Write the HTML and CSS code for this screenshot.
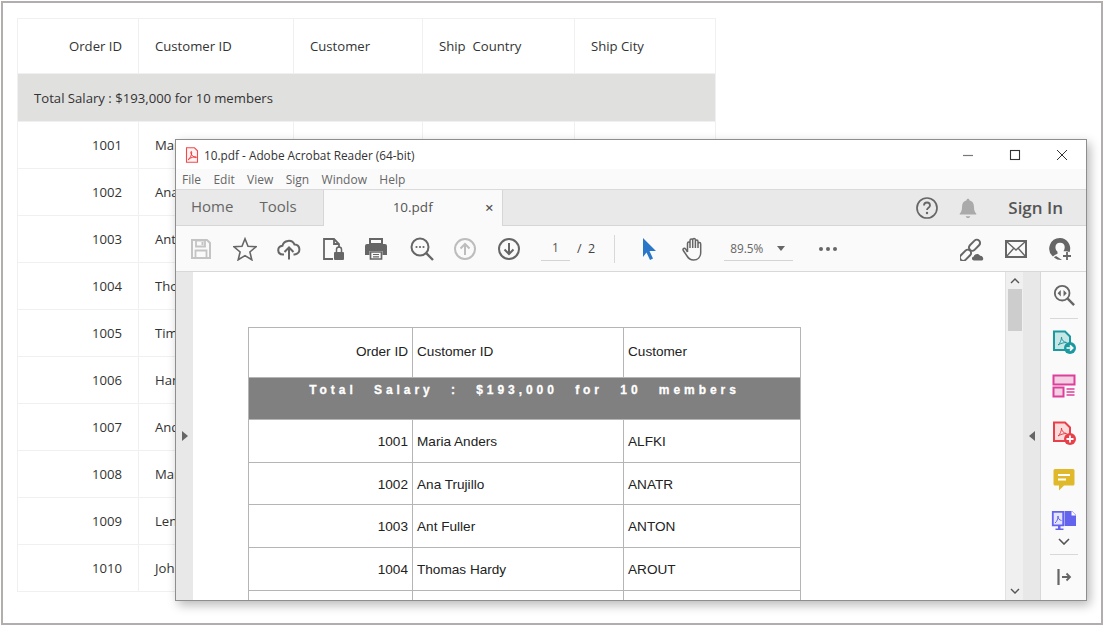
FILE: index.html
```html
<!DOCTYPE html>
<html lang="en">
<head>
<meta charset="utf-8">
<title>10.pdf - Adobe Acrobat Reader (64-bit)</title>
<link rel="stylesheet" href="styles.css">
</head>
<body>
<div class="frame">
  <table class="grid">
    <colgroup><col class="g1"><col class="g2"><col class="g3"><col class="g4"><col class="g5"></colgroup>
    <thead>
      <tr class="grid-head"><th class="num">Order ID</th><th>Customer ID</th><th>Customer</th><th class="pre">Ship  Country</th><th>Ship City</th></tr>
    </thead>
    <tbody>
      <tr class="grid-cap"><td colspan="5">Total Salary : $193,000 for 10 members</td></tr>
      <tr><td class="num">1001</td><td>Maria Anders</td><td>ALFKI</td><td></td><td></td></tr>
      <tr><td class="num">1002</td><td>Ana Trujillo</td><td>ANATR</td><td></td><td></td></tr>
      <tr><td class="num">1003</td><td>Ant Fuller</td><td>ANTON</td><td></td><td></td></tr>
      <tr><td class="num">1004</td><td>Thomas Hardy</td><td>AROUT</td><td></td><td></td></tr>
      <tr><td class="num">1005</td><td>Tim Adams</td><td></td><td></td><td></td></tr>
      <tr><td class="num">1006</td><td>Hanna Moos</td><td></td><td></td><td></td></tr>
      <tr><td class="num">1007</td><td>Andrew Fuller</td><td></td><td></td><td></td></tr>
      <tr><td class="num">1008</td><td>Martin King</td><td></td><td></td><td></td></tr>
      <tr><td class="num">1009</td><td>Lenny Lin</td><td></td><td></td><td></td></tr>
      <tr><td class="num">1010</td><td>John Steel</td><td></td><td></td><td></td></tr>
    </tbody>
  </table>

  <section class="win">
    <header class="titlebar">
      <svg class="pdficon" viewBox="0 0 14 16"><path d="M1.500.8h8l3 3v11.400h-11z" fill="#fff3f3" stroke="#f0494e" stroke-width="1.100"/><path d="M3 12.600c2-1 3.600-4 3.700-7.400 0-1-.9-1-.9 0 0 2.500 2.500 5 5 5.400.9.100.9-.8 0-.8-2.200-.1-5 .8-6.600 2.200-.6.500-.8.900-1.200.6z" fill="none" stroke="#ee3a40" stroke-width="1"/></svg>
      <span class="wintitle">10.pdf - Adobe Acrobat Reader (64-bit)</span>
      <div class="winbtns">
        <svg viewBox="0 0 12 12"><path d="M1 6.500h10" stroke="#777" stroke-width="1.200"/></svg>
        <svg viewBox="0 0 12 12"><rect x="1.500" y="1.500" width="9" height="9" fill="none" stroke="#333" stroke-width="1.100"/></svg>
        <svg viewBox="0 0 12 12"><path d="M1 1l10 10M11 1L1 11" stroke="#333" stroke-width="1"/></svg>
      </div>
    </header>
    <nav class="menubar"><span>File</span><span>Edit</span><span>View</span><span>Sign</span><span>Window</span><span>Help</span></nav>
    <div class="tabs">
      <span class="tab-link">Home</span><span class="tab-link tools">Tools</span>
      <div class="doctab"><span class="doctab-name">10.pdf</span><span class="doctab-x">×</span></div>
      <div class="tabs-right">
        <svg class="ic" viewBox="0 0 24 24"><circle cx="12" cy="12" r="10" fill="none" stroke="#666" stroke-width="1.700"/><path d="M9 9.500c0-4 6-4 6 0 0 2.300-3 2.300-3 4.500" fill="none" stroke="#666" stroke-width="1.800"/><circle cx="12" cy="17" r="1.200" fill="#666"/></svg>
        <svg class="ic bell" viewBox="0 0 24 24"><path d="M12 2c1 0 1.500.7 1.500 1.500 3.500 1 5 3.500 5 7 0 4 1 6 2.500 7.500v1H3v-1c1.500-1.500 2.500-3.500 2.500-7.500 0-3.500 1.500-6 5-7C10.500 2.700 11 2 12 2zM9.500 21h5c-.3 1.200-1.200 2-2.500 2s-2.200-.8-2.500-2z" fill="#aaa"/></svg>
        <span class="signin">Sign In</span>
      </div>
    </div>
    <div class="toolbar">
      <svg class="ic" viewBox="0 0 24 24"><path d="M3 3h15l3 3v15H3z" fill="none" stroke="#c4c4c4" stroke-width="2"/><path d="M7 3.500h9v6H7zM6.500 21v-7.500h11V21" fill="none" stroke="#c4c4c4" stroke-width="1.800"/><path d="M12.500 5h2v3h-2z" fill="#c4c4c4"/></svg>
      <svg class="ic" viewBox="0 0 24 24"><path d="M12 1.800l3 7.400 8 .6-6.100 5.200 1.900 7.800L12 18.600l-6.800 4.200 1.900-7.800L1 9.800l8-.6z" fill="none" stroke="#666" stroke-width="1.600"/></svg>
      <svg class="ic" viewBox="0 0 24 24"><path d="M7 17.500H6c-6 0-6.500-8-.5-8.800C6.500 3 15 2 17.500 7.500c6-.5 7 9.500 0 10h-1" fill="none" stroke="#666" stroke-width="2"/><path d="M12 22.500V10.500M7.500 15l4.500-4.500 4.500 4.500" fill="none" stroke="#666" stroke-width="2"/></svg>
      <svg class="ic" viewBox="0 0 24 24"><path d="M12 22H3V2h10l5 5v4" fill="none" stroke="#666" stroke-width="1.800"/><path d="M13 2v5h5" fill="none" stroke="#666" stroke-width="1.800"/><rect x="13" y="15" width="10" height="8" rx="1" fill="#666"/><path d="M15.500 15v-2.500a2.500 2.500 0 015 0V15" fill="none" stroke="#666" stroke-width="1.500"/></svg>
      <svg class="ic m-less" viewBox="0 0 24 24"><path d="M6 2h12v5H6z" fill="none" stroke="#666" stroke-width="2"/><path d="M3 7h18a2 2 0 012 2v9h-4.500v-4h-13v4H1V9a2 2 0 012-2z" fill="#666"/><path d="M6.500 15h11v7h-11z" fill="none" stroke="#666" stroke-width="1.700"/><path d="M9 17.500h6M9 19.800h6" stroke="#666" stroke-width="1.200"/></svg>
      <svg class="ic m-more" viewBox="0 0 24 24"><circle cx="10" cy="10" r="8.500" fill="none" stroke="#666" stroke-width="2"/><path d="M16.200 16.200l6.800 6.800" stroke="#666" stroke-width="2.400"/><circle cx="6.500" cy="10" r="1.100" fill="#666"/><circle cx="10" cy="10" r="1.100" fill="#666"/><circle cx="13.500" cy="10" r="1.100" fill="#666"/></svg>
      <svg class="ic m-less" viewBox="0 0 24 24"><circle cx="12" cy="12" r="10" fill="none" stroke="#bdbdbd" stroke-width="2"/><path d="M12 18V7M7.500 11.500L12 7l4.500 4.500" fill="none" stroke="#bdbdbd" stroke-width="2"/></svg>
      <svg class="ic" viewBox="0 0 24 24"><circle cx="12" cy="12" r="10" fill="none" stroke="#666" stroke-width="2"/><path d="M12 6v11M7.500 12.500L12 17l4.500-4.500" fill="none" stroke="#666" stroke-width="2"/></svg>
      <div class="pager"><span class="pageno">1</span><span class="pageof">/&nbsp; 2</span></div>
      <i class="tb-div"></i>
      <svg class="ic arrow" viewBox="0 0 24 24"><path d="M6 1l13 13h-6.500l3.500 7.500-3 1.500-3.500-7.500L6 20z" fill="#2a77c9"/></svg>
      <svg class="ic" viewBox="0 0 24 24"><path d="M6.500 15V6.500c0-2 2.500-2 2.500 0V11M9 11V3.500c0-2 2.700-2 2.700 0V11M11.700 11V3c0-2 2.700-2 2.700 0v8M14.400 11V4.500c0-2 2.600-2 2.600 0V11M17 11V7c0-2 2.700-2 2.700 0v8.500c0 4.500-3 7.500-7.200 7.500-3.500 0-5-1.500-6.500-4L2.300 13.500c-1-1.800 1.200-3 2.400-1.400L6.500 15" fill="none" stroke="#666" stroke-width="1.500"/></svg>
      <div class="zoomsel"><span>89.5%</span><i class="caret"></i></div>
      <div class="dots"><i></i><i></i><i></i></div>
      <div class="tb-right">
        <svg class="ic" viewBox="0 0 24 24"><g fill="none" stroke="#666" stroke-width="2"><rect x="-1" y="15" width="13" height="6.500" rx="3.250" transform="rotate(-45 5.500 18.250)"/><rect x="8" y="5" width="13" height="6.500" rx="3.250" transform="rotate(-45 14.500 8.250)"/></g><path d="M14 23.500c-2.600 0-2.800-3.600-.2-3.900.5-3.200 5-3.600 6.200-.8 3.200-.5 4.700 4.700 1.300 4.700z" fill="#666"/></svg>
        <svg class="ic" viewBox="0 0 24 24"><rect x="2" y="4" width="20" height="16" fill="none" stroke="#666" stroke-width="2"/><path d="M2.500 4.500l9.500 8.500 9.500-8.500M2.500 19.500l7.500-8.500M21.500 19.500L14 11" fill="none" stroke="#666" stroke-width="1.400"/></svg>
        <svg class="ic" viewBox="0 0 24 24"><path d="M12 1a10.500 10.500 0 0 0-7 18.500c1-1.500 3-1.800 4.500-2.700v-2c-3.500-3.500-2.500-9 2.500-9s5.800 5 3.500 8.500c2-.3 4.500 0 6 1A10.500 10.500 0 0 0 12 1z" fill="#666"/><path d="M8 19c-1 .5-2 1-2 1.500A11 11 0 0 0 14 23" fill="#666"/><path d="M19 15v8M15 19h8" stroke="#666" stroke-width="1.800"/></svg>
      </div>
    </div>
    <div class="viewer">
      <div class="side"><i class="tri-r"></i></div>
      <div class="doc">
        <table class="pdf">
          <colgroup><col class="p1"><col class="p2"><col class="p3"></colgroup>
          <tbody>
            <tr class="pdf-head"><td class="num">Order ID</td><td>Customer ID</td><td>Customer</td></tr>
            <tr class="pdf-band"><td colspan="3">Total Salary : $193,000 for 10 members</td></tr>
            <tr><td class="num">1001</td><td>Maria Anders</td><td>ALFKI</td></tr>
            <tr><td class="num">1002</td><td>Ana Trujillo</td><td>ANATR</td></tr>
            <tr><td class="num">1003</td><td>Ant Fuller</td><td>ANTON</td></tr>
            <tr><td class="num">1004</td><td>Thomas Hardy</td><td>AROUT</td></tr>
            <tr><td></td><td></td><td></td></tr>
          </tbody>
        </table>
      </div>
      <div class="scroll">
        <svg class="chev" viewBox="0 0 10 6"><path d="M1 5l4-4 4 4" fill="none" stroke="#555" stroke-width="1.400"/></svg>
        <div class="thumb"></div>
        <svg class="chev bottom" viewBox="0 0 10 6"><path d="M1 1l4 4 4-4" fill="none" stroke="#555" stroke-width="1.400"/></svg>
      </div>
      <div class="side handle"><i class="tri-l"></i></div>
      <aside class="rail">
        <svg class="ric" viewBox="0 0 24 24"><circle cx="10" cy="10" r="8" fill="none" stroke="#666" stroke-width="2"/><path d="M16 16l7 7" stroke="#666" stroke-width="2.600"/><path d="M8.500 6.500L5 10l3.500 3.500zM11.500 6.500L15 10l-3.500 3.500z" fill="#666"/></svg>
        <i class="rdiv"></i>
        <svg class="rcol" viewBox="0 0 24 24"><path d="M2 1.500h11l5 5V20H2z" fill="#c9e6e6" stroke="#1a9aa0" stroke-width="2"/><path d="M6 15c2-1.500 3.500-5 3.500-8 0 3 2 5 5 5.500-3 0-6 1-8.500 2.500z" fill="none" stroke="#1a9aa0" stroke-width="1"/><circle cx="18" cy="18" r="6" fill="#1a9aa0"/><path d="M14.500 18h6M18 15.300l2.700 2.700-2.700 2.700" fill="none" stroke="#fff" stroke-width="1.700"/></svg>
        <svg class="rcol pink" viewBox="0 0 24 24"><rect x="1.500" y="1.500" width="21" height="9" fill="#f4d0e4" stroke="#dd3f9a" stroke-width="2"/><rect x="1.500" y="13.500" width="10" height="9" fill="#f4d0e4" stroke="#dd3f9a" stroke-width="2"/><path d="M14.500 15h8M14.500 18h8M14.500 21h8" stroke="#dd3f9a" stroke-width="1.300"/></svg>
        <svg class="rcol red" viewBox="0 0 24 24"><path d="M2 1.500h11l5 5V20H2z" fill="#fbdcdc" stroke="#e8404a" stroke-width="2"/><path d="M6 15c2-1.500 3.500-5 3.500-8 0 3 2 5 5 5.500-3 0-6 1-8.500 2.500z" fill="none" stroke="#e8404a" stroke-width="1"/><circle cx="18" cy="18" r="6" fill="#e8404a"/><path d="M14.500 18h7M18 14.500v7" stroke="#fff" stroke-width="1.800"/></svg>
        <svg class="rcol yellow" viewBox="0 0 24 24"><path d="M3 2h18a1.500 1.500 0 011.500 1.500V17a1.500 1.500 0 01-1.500 1.500H12l-5 5v-5H3A1.500 1.500 0 011.500 17V3.500A1.500 1.500 0 013 2z" fill="#dfb92a"/><path d="M6 8h12M6 12.500h8" stroke="#fff" stroke-width="1.800"/></svg>
        <svg class="purple" viewBox="0 0 26 20"><path d="M1.800 1.800h10.400v13.500H1.800z" fill="#e4e4ff" stroke="#6363ee" stroke-width="1.800"/><path d="M4 13c2-1.500 3-4 3-7 0 3 1.500 4 3.500 4.500" fill="none" stroke="#6363ee" stroke-width="1"/><path d="M13.500 1H21l4 4v11H13.500z" fill="#6363ee"/><path d="M20.500 1v4.500H25z" fill="#fff"/><path d="M7 15h2.500v3.500H7zM4.500 18.500h8V20h-8z" fill="#6363ee"/></svg>
        <svg class="more" viewBox="0 0 12 7"><path d="M1 1l5 5 5-5" fill="none" stroke="#555" stroke-width="1.600"/></svg>
        <i class="rdiv second"></i>
        <svg class="exit" viewBox="0 0 16 16"><path d="M2.500 0v16" stroke="#666" stroke-width="2.200"/><path d="M6 8h8M10.500 4.500L14 8l-3.500 3.500" fill="none" stroke="#666" stroke-width="1.800"/></svg>
      </aside>
    </div>
  </section>
</div>
</body>
</html>
```

FILE: styles.css
```css
* { box-sizing: border-box; }
html, body { margin: 0; background: #fff; }
body { width: 1104px; height: 626px; overflow: hidden; padding: 1px; }

.frame {
  position: relative;
  width: 1102px;
  height: 624px;
  border: 2px solid #b3aeae;
  padding: 15px 14px;
  background: #fff;
  overflow: hidden;
}

/* background grid */
.grid {
  width: 698px;
  table-layout: fixed;
  border-collapse: collapse;
  font: 13.150px "Open Sans", sans-serif;
  color: #333;
}
.g1 { width: 121px; }
.g2 { width: 155px; }
.g3 { width: 129px; }
.g4 { width: 152px; }
.g5 { width: 141px; }
.grid th, .grid td {
  border: 1px solid #f0f0f0;
  height: 47px;
  padding: 0 16px;
  font-weight: 400;
  text-align: left;
  white-space: nowrap;
  overflow: hidden;
}
.grid th.num, .grid td.num { text-align: right; }
.grid .pre { white-space: pre; }
.grid .grid-head th { height: 55px; }
.grid .grid-cap td { height: 48px; background: #e0e0df; }

/* acrobat window */
.win {
  position: absolute;
  left: 172px;
  top: 136px;
  width: 912px;
  height: 462px;
  display: flex;
  flex-direction: column;
  background: #fff;
  border: 1px solid #8e8e8e;
  box-shadow: 3px 4px 10px rgba(0, 0, 0, .28);
  font-family: "Open Sans", sans-serif;
  color: #444;
}
.titlebar { height: 29px; display: flex; align-items: center; padding-left: 9px; background: #fff; flex: none; }
.pdficon { width: 14px; height: 16px; }
.wintitle { margin-left: 5px; font-size: 11.800px; color: #333; }
.winbtns { margin-left: auto; display: flex; gap: 35px; padding-right: 18px; }
.winbtns svg { width: 12px; height: 12px; }

.menubar { height: 21px; flex: none; display: flex; align-items: center; gap: 12.400px; padding-left: 6px; background: #fafafa; border-bottom: 1px solid #dadada; font-size: 12px; color: #666; }

.tabs { height: 36px; flex: none; display: flex; align-items: center; background: #e9e9e9; border-bottom: 1px solid #d6d6d6; }
.tab-link { font-size: 15px; color: #666; margin-left: 15px; padding-bottom: 3px; }
.tab-link.tools { margin-left: 26px; }
.doctab { margin-left: 26px; width: 180px; height: 36px; display: flex; align-items: center; background: #fafafa; border-left: 1px solid #d6d6d6; border-right: 1px solid #d6d6d6; position: relative; }
.doctab-name { flex: 1; text-align: center; font-size: 13.500px; color: #555; padding-bottom: 2px; }
.doctab-x { position: absolute; right: 8px; top: 7px; font-size: 15px; font-weight: 600; color: #555; }
.tabs-right { margin-left: auto; display: flex; align-items: center; gap: 18px; padding-right: 23px; }
.signin { margin-left: 11px; font-size: 17px; font-weight: 600; color: #555; }

.toolbar { height: 46px; flex: none; display: flex; align-items: center; gap: 20px; padding-left: 13px; background: #fafafa; border-bottom: 1px solid #d8d8d8; }
.ic { width: 24px; height: 24px; flex: none; }
.bell { width: 22px; height: 22px; }
.m-less { margin-left: -1px; }
.m-more { margin-left: 2px; }
.pager { display: flex; align-items: center; font-size: 12px; color: #444; }
.pageno { width: 29px; height: 25px; line-height: 24px; text-align: center; border-bottom: 1px solid #d4d4d4; color: #555; }
.pageof { margin-left: 7px; font-size: 12.500px; }
.tb-div { width: 1px; height: 28px; background: #d8d8d8; margin-left: -1px; }
.arrow { margin-left: 2px; }
.zoomsel { width: 69px; height: 25px; margin-left: -1px; display: flex; align-items: center; padding-left: 6px; font-size: 11.800px; color: #666; border-bottom: 1px solid #d4d4d4; }
.caret { margin-left: 14px; width: 0; height: 0; border-left: 4px solid transparent; border-right: 4px solid transparent; border-top: 5px solid #666; }
.dots { display: flex; gap: 3px; margin-left: 6px; }
.dots i { width: 4px; height: 4px; border-radius: 50%; background: #666; }
.tb-right { margin-left: auto; display: flex; gap: 20px; padding-right: 14px; }

.viewer { flex: 1; min-height: 0; display: flex; overflow: hidden; }
.side { width: 17px; flex: none; background: #e8e8e8; display: flex; align-items: center; justify-content: center; }
.tri-r { width: 0; height: 0; border-top: 5px solid transparent; border-bottom: 5px solid transparent; border-left: 6px solid #666; }
.tri-l { width: 0; height: 0; border-top: 5px solid transparent; border-bottom: 5px solid transparent; border-right: 6px solid #666; }
.doc { flex: 1; min-width: 0; background: #fff; padding: 55px 0 0 55px; overflow: hidden; }

.pdf { width: 552px; table-layout: fixed; border-collapse: collapse; font: 13.600px "Liberation Sans", Arial, sans-serif; color: #222; }
.p1 { width: 164px; }
.p2 { width: 211px; }
.p3 { width: 177px; }
.pdf td { border: 1px solid #b5b5b5; height: 42.700px; padding: 1px 4px 0; }
.pdf td.num { text-align: right; }
.pdf .pdf-head td { height: 50px; padding-top: 0; padding-bottom: 3px; }
.pdf .pdf-band td {
  height: 42px;
  background: #808080;
  border-color: #808080 #b5b5b5 #b5b5b5;
  padding: 5px 0 0;
  vertical-align: top;
  text-align: center;
  color: #fff;
  font-size: 12px;
  font-weight: 700;
  letter-spacing: 3.950px;
  word-spacing: 10px;
  -webkit-text-stroke: .3px #fff;
}

.scroll { width: 18px; flex: none; background: #f0f0f0; border-left: 1px solid #e2e2e2; display: flex; flex-direction: column; align-items: center; padding-top: 6px; }
.chev { width: 10px; height: 6px; flex: none; }
.thumb { width: 14px; height: 42px; margin-top: 5px; background: #cdcdcd; }
.chev.bottom { margin-top: auto; margin-bottom: 6px; }
.rail { width: 46px; flex: none; background: #fafafa; border-left: 1px solid #d8d8d8; display: flex; flex-direction: column; align-items: center; padding-top: 12px; }
.ric { width: 22px; height: 22px; flex: none; }
.rcol { width: 24px; height: 24px; flex: none; }
.rdiv { width: 28px; height: 1px; background: #d8d8d8; margin: 12px 0 11px; flex: none; }
.pink { margin-top: 20px; }
.red { margin-top: 23px; }
.yellow { margin-top: 22px; }
.purple { width: 26px; height: 20px; margin-top: 19px; flex: none; }
.more { width: 12px; height: 7px; margin-top: 8px; flex: none; }
.rdiv.second { margin: 9px 0 14px; }
.exit { width: 16px; height: 16px; flex: none; }
```
